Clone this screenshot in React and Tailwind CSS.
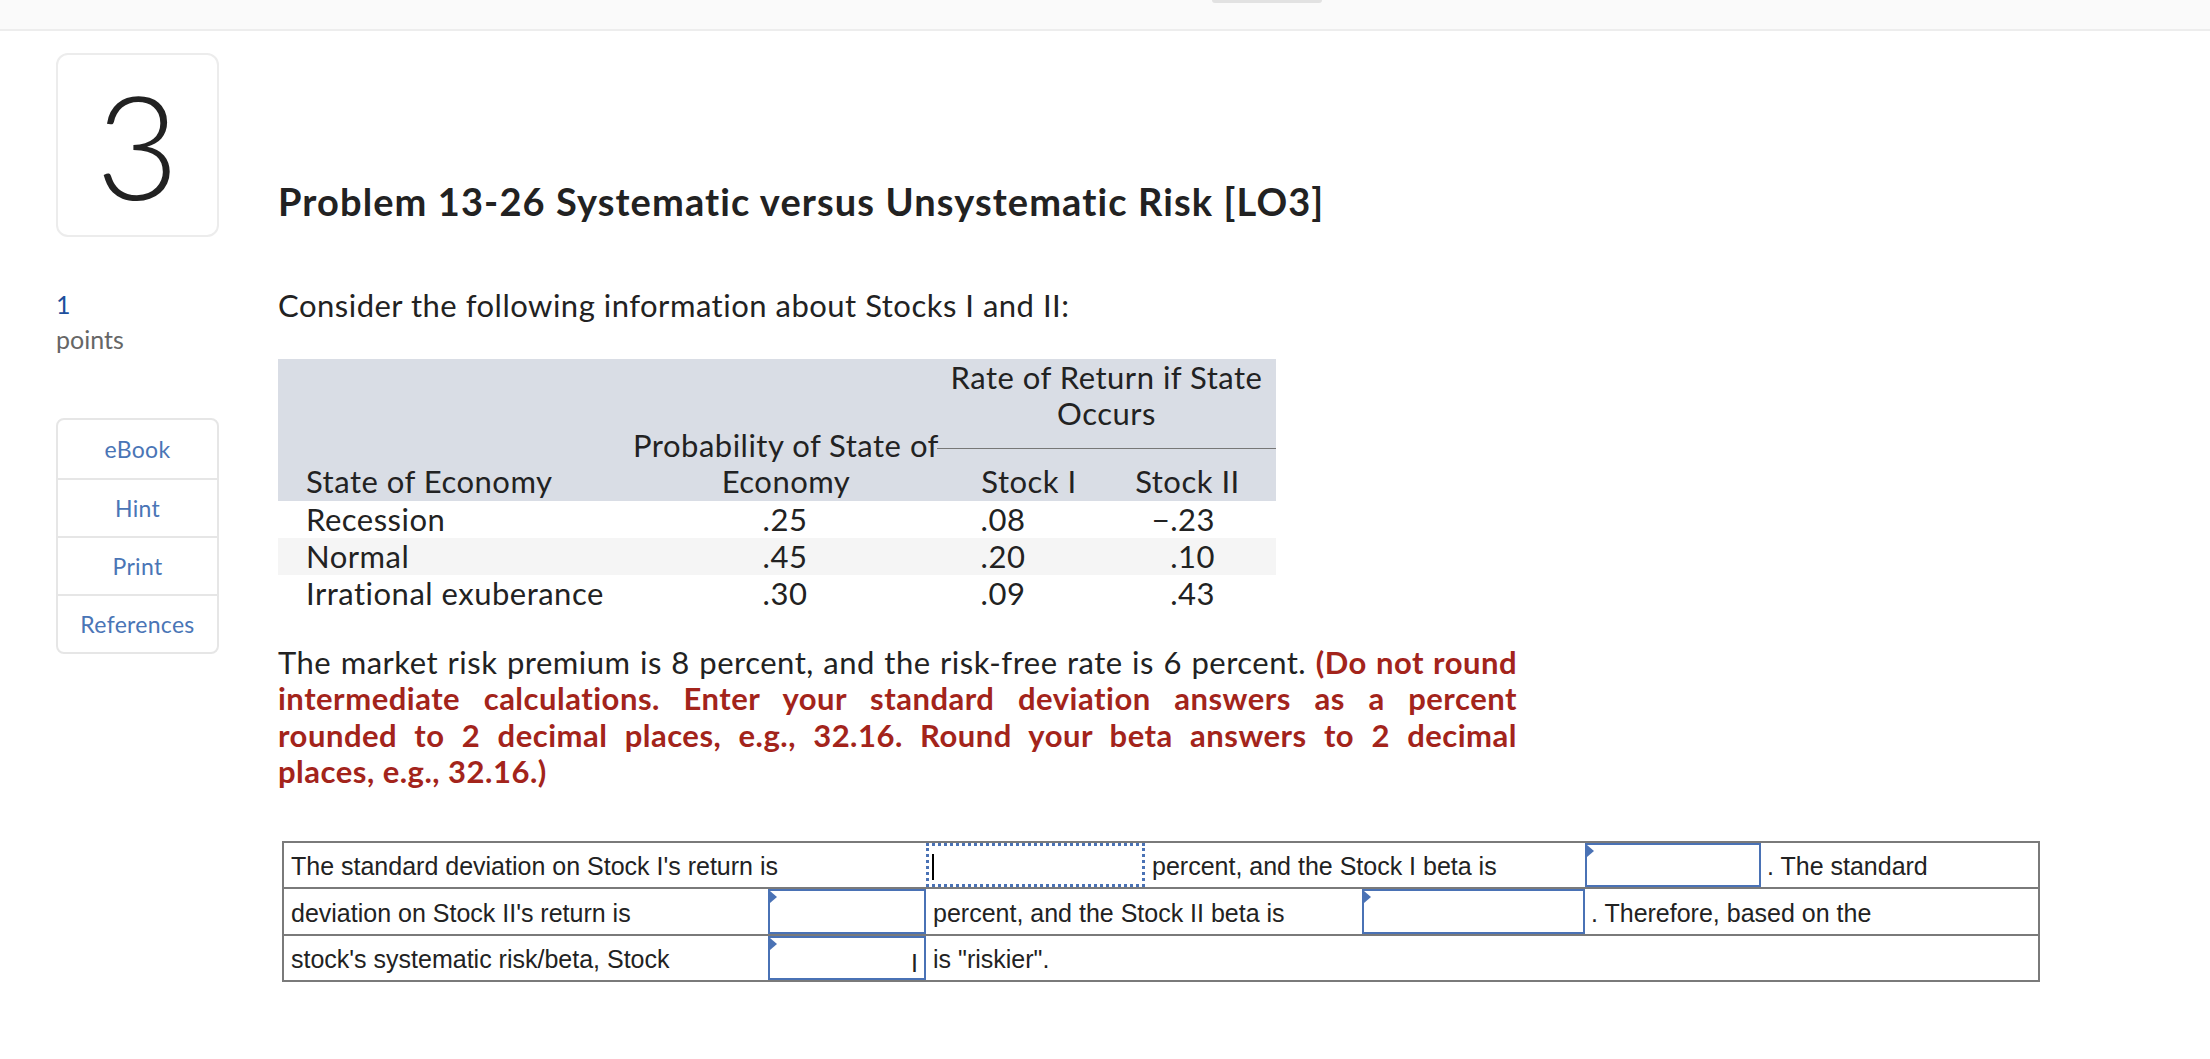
import React from 'react';

const proxima = { fontFamily: 'Lato, "Open Sans", sans-serif' };

const Flag = () => (
  <span className="absolute left-0 top-0 h-0 w-0 border-y-[6px] border-l-[7px] border-y-transparent border-l-[#4a72b5]" />
);

const AnswerBox = ({ value, active }) => (
  <td className="relative p-0">
    {active ? (
      <div className="absolute inset-0 border-[3px] border-dotted border-[#4a72b5]">
        <span className="absolute left-[3px] top-[8px] h-[26px] w-[2px] bg-black" />
      </div>
    ) : (
      <div className="absolute inset-0 border-2 border-[#4a72b5]">
        <Flag />
        {value && <span className="absolute right-[6px] top-[7px]">{value}</span>}
      </div>
    )}
  </td>
);

const App = () => {
  const rows = [
    { state: 'Recession', prob: '.25', s1: '.08', s2: '\u2212.23' },
    { state: 'Normal', prob: '.45', s1: '.20', s2: '.10' },
    { state: 'Irrational exuberance', prob: '.30', s1: '.09', s2: '.43' },
  ];

  return (
    <div className="min-h-screen w-[2210px] bg-white text-[#222]" style={proxima}>
      {/* top strip */}
      <div className="relative h-[31px] border-b-2 border-[#ededed] bg-[#fafafa]">
        <div className="absolute left-[1212px] top-0 h-[3px] w-[110px] rounded-b bg-[#e2e2e2]" />
      </div>

      {/* question header */}
      <div className="mt-[22px] flex items-end">
        <div className="ml-[56px] flex h-[184px] w-[163px] items-center justify-center rounded-xl border-2 border-[#ececec]">
          <span className="text-[144px] font-light leading-none text-[#222]">3</span>
        </div>
        <h1 className="mb-[13px] ml-[59px] text-[38px] font-bold leading-[46px] tracking-[1.1px] text-[#222]">
          Problem 13-26 Systematic versus Unsystematic Risk [LO3]
        </h1>
      </div>

      <div className="mt-[50px] flex">
        {/* left rail */}
        <div className="ml-[56px] w-[163px] shrink-0">
          <div className="text-[25px] leading-[35px] text-[#1d4f9c]">1</div>
          <div className="text-[25px] leading-[35px] text-[#666]">points</div>
          <div className="mt-[61px] overflow-hidden rounded-lg border-2 border-[#e6e6e6] text-[23px] tracking-[0.3px] text-[#4a75b6]">
            {['eBook', 'Hint', 'Print', 'References'].map((b, i) => (
              <div
                key={b}
                className={`flex h-[58px] items-center justify-center ${i > 0 ? 'border-t-2 border-[#e6e6e6]' : ''}`}
              >
                {b}
              </div>
            ))}
          </div>
        </div>

        {/* main content */}
        <div className="ml-[59px]">
          <p className="text-[31px] leading-[36px] tracking-[0.5px]">
            Consider the following information about Stocks I and II:
          </p>

          <table className="mt-[36px] w-[998px] table-fixed border-collapse text-[31px] leading-[36px] tracking-[0.5px]">
            <colgroup>
              <col className="w-[355px]" />
              <col className="w-[304px]" />
              <col className="w-[162px]" />
              <col className="w-[177px]" />
            </colgroup>
            <thead className="bg-[#d9dde5]">
              <tr className="h-[89px]">
                <th rowSpan={2} className="pb-[2px] pl-[28px] text-left align-bottom font-normal">
                  State of Economy
                </th>
                <th rowSpan={2} className="whitespace-nowrap pb-[2px] text-right align-bottom font-normal">
                  <span className="inline-block text-center">
                    Probability of State of
                    <br />
                    Economy
                  </span>
                </th>
                <th colSpan={2} className="border-b border-[#777] pb-[17px] align-top font-normal">
                  Rate of Return if State
                  <br />
                  Occurs
                </th>
              </tr>
              <tr className="h-[52px]">
                <th className="pb-[2px] pl-[22px] align-bottom font-normal">Stock I</th>
                <th className="pb-[2px] align-bottom font-normal">Stock II</th>
              </tr>
            </thead>
            <tbody>
              {rows.map((r, i) => (
                <tr key={r.state} className={`h-[37px] leading-[34px] ${i === 1 ? 'bg-[#f5f5f5]' : ''}`}>
                  <td className="pl-[28px]">{r.state}</td>
                  <td className="text-center">{r.prob}</td>
                  <td className="pr-[30px] text-center">{r.s1}</td>
                  <td className="pr-[61px] text-right">{r.s2}</td>
                </tr>
              ))}
            </tbody>
          </table>

          <div className="mt-[32px] w-[1239px] text-[31px] leading-[36.6px] tracking-[0.5px]">
            <div className="text-justify [text-align-last:justify]">
              The market risk premium is 8 percent, and the risk-free rate is 6 percent.{' '}
              <b className="text-[#a3241b]">(Do not round</b>
            </div>
            <div className="text-justify font-bold text-[#a3241b] [text-align-last:justify]">
              intermediate calculations. Enter your standard deviation answers as a percent
            </div>
            <div className="text-justify font-bold text-[#a3241b] [text-align-last:justify]">
              rounded to 2 decimal places, e.g., 32.16. Round your beta answers to 2 decimal
            </div>
            <div className="font-bold text-[#a3241b]">places, e.g., 32.16.)</div>
          </div>

          {/* answer grid */}
          <table
            className="ml-[4px] mt-[51px] w-[1756px] table-fixed border-collapse border-2 border-[#7a7a7a] text-[25px] text-[#222]"
            style={{ fontFamily: '"Liberation Sans", Arial, sans-serif' }}
          >
            <colgroup>
              <col className="w-[485px]" />
              <col className="w-[158px]" />
              <col className="w-[219px]" />
              <col className="w-[217px]" />
              <col className="w-[223px]" />
              <col className="w-[176px]" />
              <col className="w-[278px]" />
            </colgroup>
            <tbody>
              <tr className="h-[46px] border-b-2 border-[#7a7a7a]">
                <td colSpan={2} className="pl-[7px] pt-[4px]">The standard deviation on Stock I's return is</td>
                <AnswerBox active />
                <td colSpan={2} className="pl-[7px] pt-[4px]">percent, and the Stock I beta is</td>
                <AnswerBox />
                <td className="pl-[6px] pt-[4px]">. The standard</td>
              </tr>
              <tr className="h-[47px] border-b-2 border-[#7a7a7a]">
                <td className="pl-[7px] pt-[4px]">deviation on Stock II's return is</td>
                <AnswerBox />
                <td colSpan={2} className="pl-[7px] pt-[4px]">percent, and the Stock II beta is</td>
                <AnswerBox />
                <td colSpan={2} className="pl-[6px] pt-[4px]">. Therefore, based on the</td>
              </tr>
              <tr className="h-[46px]">
                <td className="pl-[7px] pt-[4px]">stock's systematic risk/beta, Stock</td>
                <AnswerBox value="I" />
                <td colSpan={5} className="pl-[7px] pt-[4px]">is "riskier".</td>
              </tr>
            </tbody>
          </table>
        </div>
      </div>
    </div>
  );
};

export default App;
